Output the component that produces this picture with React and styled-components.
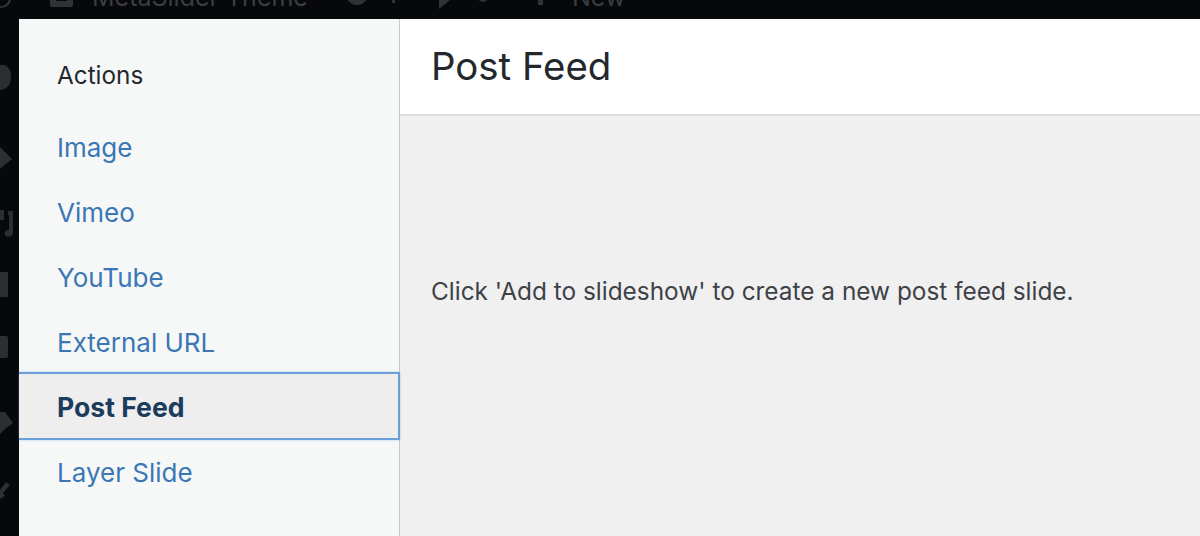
import React from "react";
import styled, { createGlobalStyle } from "styled-components";

const Global = createGlobalStyle`
  html, body { margin: 0; padding: 0; height: 100%; background: #050709; }
  #root { height: 536px; }
`;

const FONT = `Inter, "Liberation Sans", sans-serif`;

const Page = styled.div`
  width: 1200px;
  height: 536px;
  overflow: hidden;
  display: grid;
  grid-template-columns: 19px 1fr;
  grid-template-rows: 19px 1fr;
  background: #06080b;
  font-family: ${FONT};
`;

const AdminBar = styled.div`
  grid-column: 1 / 3;
  height: 19px;
  overflow: hidden;
  display: flex;
  align-items: flex-end;
  color: #3a3e43;
`;

const BarIcon = styled.svg`
  flex: none;
  width: ${(p) => p.$w}px;
  height: 24px;
  margin-left: ${(p) => p.$gap}px;
  margin-bottom: ${(p) => 19 - p.$bottom}px;
  fill: #2f3338;
`;

const BarText = styled.span`
  flex: none;
  margin-left: ${(p) => p.$gap}px;
  margin-bottom: 10px;
  font-size: 25px;
  line-height: 24px;
  white-space: nowrap;
`;

const Rail = styled.div`
  width: 19px;
  overflow: hidden;
  display: flex;
  flex-direction: column;
`;

const RailIcon = styled.svg`
  flex: none;
  width: 19px;
  height: 40px;
  margin-top: ${(p) => p.$gap}px;
  fill: #2b2f34;
`;

const Modal = styled.div`
  display: grid;
  grid-template-columns: 381px 1fr;
  min-height: 0;
`;

const Sidebar = styled.nav`
  background: #f6f8f8;
  border-right: 1px solid #c6c8ca;
  box-sizing: border-box;
  padding-top: 38px;
  display: flex;
  flex-direction: column;
`;

const SideTitle = styled.h3`
  margin: 0 0 22px 38px;
  height: 36px;
  font-size: 24.3px;
  line-height: 36px;
  font-weight: 400;
  color: #23282d;
`;

const Item = styled.a`
  position: relative;
  box-sizing: border-box;
  display: flex;
  align-items: center;
  height: ${(p) => (p.$active ? 68 : 65)}px;
  margin-top: ${(p) => (p.$active ? -3 : 0)}px;
  margin-right: ${(p) => (p.$active ? -1 : 0)}px;
  padding-left: 38px;
  padding-top: ${(p) => (p.$active ? 2 : 0)}px;
  font-size: ${(p) => (p.$active ? 26.6 : 26)}px;
  color: ${(p) => (p.$active ? "#1b3c5a" : "#3b76b5")};
  font-weight: ${(p) => (p.$active ? 700 : 400)};
  background: ${(p) => (p.$active ? "#eeeeee" : "transparent")};
  border: ${(p) => (p.$active ? "2px solid #6a9fd8" : "none")};
  border-left: none;
  box-shadow: ${(p) => (p.$active ? "0 0 2px rgba(106,159,216,.55)" : "none")};
`;

const Main = styled.main`
  background: #f0f0f1;
  display: flex;
  flex-direction: column;
  min-width: 0;
`;

const Header = styled.header`
  height: 97px;
  box-sizing: border-box;
  background: #ffffff;
  border-bottom: 2px solid #dcdddf;
  padding: 2px 0 0 31px;
  display: flex;
  align-items: center;
`;

const Title = styled.h1`
  margin: 0 0 2px;
  font-size: 38.4px;
  line-height: 1;
  font-weight: 400;
  color: #23282d;
`;

const Body = styled.div`
  flex: 1;
  padding: 157px 0 0 31px;
`;

const Message = styled.p`
  margin: 0;
  font-size: 24.4px;
  line-height: 36px;
  color: #3e4247;
`;

const items = ["Image", "Vimeo", "YouTube", "External URL", "Post Feed", "Layer Slide"];

export default function App() {
  return (
    <>
      <Global />
      <Page>
        <AdminBar>
          <BarIcon $w={12} $gap={0} $bottom={10} viewBox="0 0 12 24"><path d="M0 22c6 0 10-3 11-8l1-14h-2l-1 13c-1 4-4 7-9 7z" /></BarIcon>
          <BarIcon $w={23} $gap={38} $bottom={7} viewBox="0 0 23 24"><path d="M0 0h23v22a2 2 0 0 1-2 2H2a2 2 0 0 1-2-2zM6 0v18h11V0z" /></BarIcon>
          <BarText $gap={19}>MetaSlider Theme</BarText>
          <BarIcon $w={22} $gap={38} $bottom={5} viewBox="0 0 22 24"><circle cx="11" cy="13" r="11" /></BarIcon>
          <BarIcon $w={5} $gap={23} $bottom={3} viewBox="0 0 5 24"><rect x="1" width="3" height="24" /></BarIcon>
          <BarIcon $w={11} $gap={43} $bottom={9} viewBox="0 0 11 24"><path d="M0 0h11v15L0 24z" /></BarIcon>
          <BarIcon $w={10} $gap={28} $bottom={3} viewBox="0 0 10 24"><circle cx="5" cy="18" r="5" /></BarIcon>
          <BarIcon $w={5} $gap={50} $bottom={5} viewBox="0 0 5 24"><rect width="5" height="24" /></BarIcon>
          <BarText $gap={29}>New</BarText>
        </AdminBar>
        <Rail>
          <RailIcon $gap={43} viewBox="0 0 19 40"><path d="M0 3c7-1 11 4 11 12S6 28 0 28z" /></RailIcon>
          <RailIcon $gap={43} viewBox="0 0 19 40"><path d="M0 2l12 12L0 24z" /></RailIcon>
          <RailIcon $gap={17} viewBox="0 0 19 40"><path d="M0 8h4v10H0zM8 9h5v22c0 4-6 5-8 2-1-3 1-5 4-5V13H8z" /></RailIcon>
          <RailIcon $gap={27} viewBox="0 0 19 40"><path d="M0 3h8v25H0z" /></RailIcon>
          <RailIcon $gap={25} viewBox="0 0 19 40"><path d="M0 2h6a2 2 0 0 1 2 2v18a2 2 0 0 1-2 2H0z" /></RailIcon>
          <RailIcon $gap={38} viewBox="0 0 19 40"><path d="M0 0l5 0 8 11-8 6-5 5z" /></RailIcon>
          <RailIcon $gap={21} viewBox="0 0 19 40"><path d="M0 17l6-8 4 3-7 8 2 3-5 3z" /></RailIcon>
        </Rail>
        <Modal>
          <Sidebar>
            <SideTitle>Actions</SideTitle>
            {items.map((t) => (
              <Item key={t} $active={t === "Post Feed"}>{t}</Item>
            ))}
          </Sidebar>
          <Main>
            <Header><Title>Post Feed</Title></Header>
            <Body>
              <Message>Click 'Add to slideshow' to create a new post feed slide.</Message>
            </Body>
          </Main>
        </Modal>
      </Page>
    </>
  );
}
